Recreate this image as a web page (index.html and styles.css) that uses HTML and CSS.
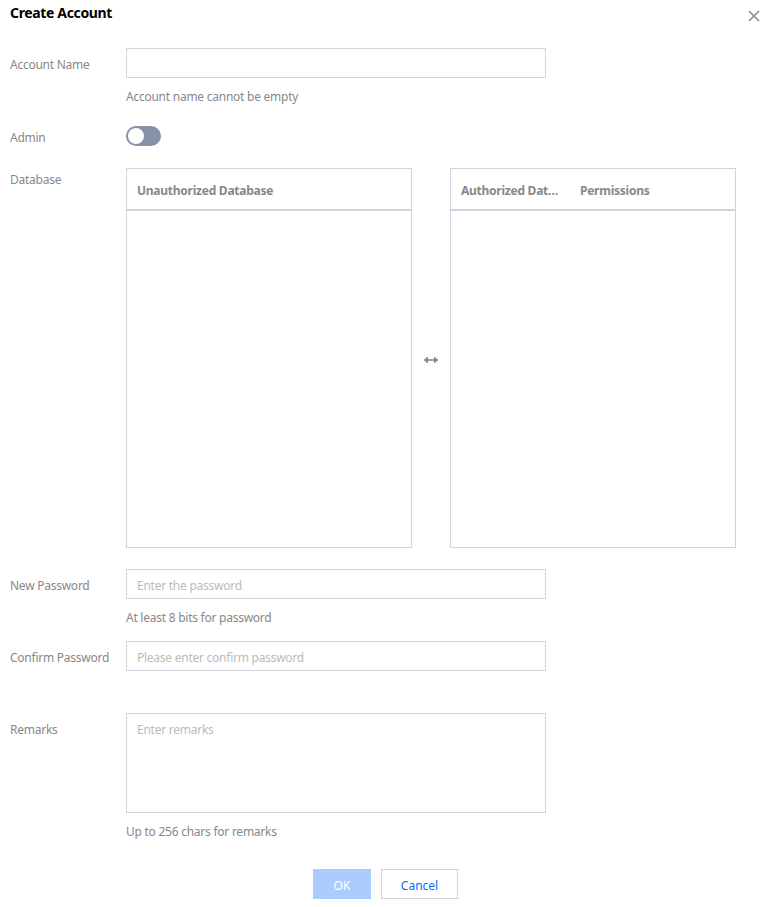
FILE: index.html
```html
<!DOCTYPE html>
<html>
<head>
<meta charset="utf-8">
<link rel="stylesheet" href="styles.css">
</head>
<body>
<div class="dialog">
  <div class="header">
    <div class="title">Create Account</div>
    <button class="close" aria-label="Close">
      <svg width="12" height="12" viewBox="0 0 12 12"><path d="M1 1L11 11M11 1L1 11" stroke="#888" stroke-width="1.5" fill="none"/></svg>
    </button>
  </div>

  <div class="form">
    <div class="row row-name">
      <div class="label lh30">Account Name</div>
      <div class="field">
        <input class="input" type="text">
        <div class="help">Account name cannot be empty</div>
      </div>
    </div>

    <div class="row row-admin">
      <div class="label lh20">Admin</div>
      <div class="field">
        <span class="switch"><span class="knob"></span></span>
      </div>
    </div>

    <div class="row row-db">
      <div class="label lh20">Database</div>
      <div class="field transfer">
        <div class="box">
          <div class="box-head"><span class="col-full">Unauthorized Database</span></div>
          <div class="box-body"></div>
        </div>
        <div class="swap">
          <svg width="16" height="10" viewBox="0 0 16 10"><path d="M4 5H12" stroke="#888" stroke-width="1.6"/><path d="M0.5 5L5 1.5V8.5Z M15.5 5L11 1.5V8.5Z" fill="#888"/></svg>
        </div>
        <div class="box">
          <div class="box-head"><span class="col-name">Authorized Database</span><span class="col-perm">Permissions</span></div>
          <div class="box-body"></div>
        </div>
      </div>
    </div>

    <div class="row row-pwd">
      <div class="label lh30">New Password</div>
      <div class="field">
        <input class="input" type="password" placeholder="Enter the password">
        <div class="help">At least 8 bits for password</div>
      </div>
    </div>

    <div class="row row-confirm">
      <div class="label lh30">Confirm Password</div>
      <div class="field">
        <input class="input" type="password" placeholder="Please enter confirm password">
      </div>
    </div>

    <div class="row row-remarks">
      <div class="label lh30">Remarks</div>
      <div class="field">
        <textarea class="textarea" placeholder="Enter remarks"></textarea>
        <div class="help">Up to 256 chars for remarks</div>
      </div>
    </div>
  </div>

  <div class="footer">
    <button class="btn btn-primary">OK</button>
    <button class="btn btn-default">Cancel</button>
  </div>
</div>
</body>
</html>
```
FILE: styles.css
```css
* { box-sizing: border-box; }
html, body { margin: 0; padding: 0; background: #fff; }
body {
  font-family: "Segoe UI", "Noto Sans", "Open Sans", sans-serif;
  font-size: 12px;
  letter-spacing: -0.25px;
  color: #888;
}
.dialog { width: 771px; padding: 0 10px; }
.header {
  height: 26px;
  display: flex;
  align-items: center;
  justify-content: space-between;
}
.title { font-size: 14px; font-weight: 700; color: #000; line-height: 26px; letter-spacing: -0.35px; }
.close {
  border: 0; background: none; padding: 0; margin-right: 1px; margin-top: 5px;
  width: 12px; height: 12px; display: flex; cursor: pointer;
}
.form { display: flex; flex-direction: column; }
.row { display: flex; }
.label { width: 116px; flex: none; color: #888; white-space: nowrap; padding-top: 2px; }
.lh30 { line-height: 30px; height: 30px; }
.lh20 { line-height: 20px; height: 20px; }
.field { display: flex; flex-direction: column; }
.row-name { margin-top: 22px; }
.row-admin { margin-top: 20px; }
.row-db { margin-top: 22px; }
.row-pwd { margin-top: 21px; }
.row-confirm { margin-top: 14px; }
.row-remarks { margin-top: 42px; }
.input, .textarea {
  width: 420px;
  border: 1px solid #cfd5de;
  border-radius: 0;
  font-family: inherit;
  font-size: 12px;
  letter-spacing: -0.25px;
  color: #444;
  outline: none;
  padding: 0 10px;
  background: #fff;
}
.input { height: 30px; padding-top: 2px; }
.textarea { height: 100px; resize: none; padding: 7px 10px; display: block; }
.input::placeholder, .textarea::placeholder { color: #bbb; }
.help { margin-top: 10px; line-height: 18px; color: #888; }
.switch {
  display: block;
  width: 35px; height: 20px;
  border-radius: 10px;
  background: #8592a6;
  position: relative;
}
.knob {
  position: absolute; left: 2px; top: 2px;
  width: 16px; height: 16px; border-radius: 50%;
  background: #fff;
}
.transfer { flex-direction: row; }
.box {
  width: 286px; height: 380px;
  border: 1px solid #cfd5de;
  display: flex; flex-direction: column;
}
.box-head {
  height: 42px;
  border-bottom: 2px solid #cfd5de;
  display: flex; align-items: center;
  padding: 2px 10px 0;
  font-weight: 700;
  color: #888;
  white-space: nowrap;
}
.col-name { width: 119px; overflow: hidden; text-overflow: ellipsis; padding-right: 20px; }
.box-body { flex: 1; }
.swap { width: 38px; display: flex; align-items: center; justify-content: center; padding-top: 4px; }
.footer {
  margin-top: 28px;
  display: flex; justify-content: center; gap: 10px;
}
.btn {
  height: 30px;
  font-family: inherit; font-size: 12px;
  border-radius: 0; cursor: pointer;
  padding: 2px 0 0;
}
.btn-primary { width: 58px; background: #abcdfd; color: #fff; border: 0; }
.btn-default { width: 77px; background: #fff; color: #006eff; border: 1px solid #cfd5de; }
```
